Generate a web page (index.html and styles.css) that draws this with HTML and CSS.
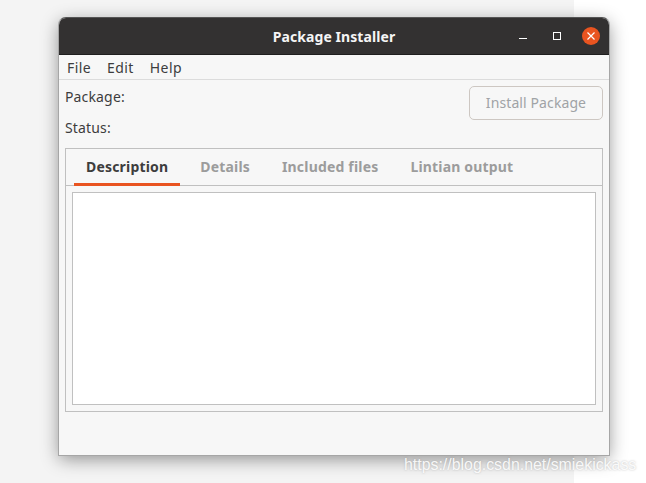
FILE: index.html
```html
<!DOCTYPE html>
<html lang="en">
<head>
<meta charset="utf-8">
<title>Package Installer</title>
<link rel="stylesheet" href="styles.css">
</head>
<body>
<div class="desktop">
  <div class="window">
    <header class="titlebar">
      <div class="title">Package Installer</div>
      <div class="controls">
        <svg class="ctl" width="16" height="16" viewBox="0 0 16 16"><rect x="4" y="10" width="8" height="1" fill="#fff"/></svg>
        <svg class="ctl" width="16" height="16" viewBox="0 0 16 16"><rect x="4.5" y="4.5" width="7" height="7" fill="none" stroke="#fff" stroke-width="1"/></svg>
        <svg class="ctl close" width="18" height="18" viewBox="0 0 18 18"><circle cx="9" cy="9" r="9" fill="#e95420"/><path d="M5.5 5.5l7 7M12.5 5.5l-7 7" stroke="#fff" stroke-width="1.2" fill="none"/></svg>
      </div>
    </header>
    <nav class="menubar">
      <span class="menu">File</span><span class="menu">Edit</span><span class="menu">Help</span>
    </nav>
    <div class="content">
      <div class="info">
        <div class="labels">
          <div class="label">Package:</div>
          <div class="label">Status:</div>
        </div>
        <button class="install" disabled>Install Package</button>
      </div>
      <section class="notebook">
        <div class="tabs">
          <span class="tab active">Description</span>
          <span class="tab">Details</span>
          <span class="tab">Included files</span>
          <span class="tab">Lintian output</span>
        </div>
        <div class="page"><div class="textview"></div></div>
      </section>
    </div>
  </div>
  <div class="watermark">https://blog.csdn.net/smiekickass</div>
</div>
</body>
</html>
```
FILE: styles.css
```css
* { box-sizing: border-box; }
html, body { margin: 0; padding: 0; background: #fff; }
body { width: 646px; height: 483px; overflow: hidden; font-family: "Noto Sans", sans-serif; }
.desktop { position: relative; width: 646px; height: 483px; }
.desktop::before { content: ""; position: absolute; left: 0; top: 0; width: 574px; height: 483px; background: #f4f4f4; }
.window {
  position: absolute; left: 58px; top: 17px; width: 552px; height: 439px; z-index: 1;
  display: flex; flex-direction: column;
  background: #f7f7f7; border: 1px solid #a6a6a6; border-top-color: #555;
  border-radius: 8px 8px 0 0; overflow: hidden;
}
.desktop::after {
  content: ""; position: absolute; left: 59px; top: 18px; width: 550px; height: 437px;
  border-radius: 8px 8px 0 0; box-shadow: 0 4px 18px rgba(0,0,0,.42); z-index: 0;
}
.titlebar {
  position: relative; height: 37px; flex: none; background: #333131;
  border-bottom: 1px solid #1f1e1e;
  display: flex; align-items: center; justify-content: center;
}
.title { color: #f5f5f5; font-size: 14px; font-weight: 700; letter-spacing: .08px; }
.controls { position: absolute; right: 9px; top: 9px; display: flex; align-items: center; gap: 18px; }
.ctl { display: block; flex: none; }
.close { margin-left: -1px; }
.menubar {
  height: 25px; flex: none; display: flex; align-items: center; padding-left: 8px; gap: 16px;
  border-bottom: 1px solid #dcdcdc;
}
.menu { font-size: 14px; color: #3d3d3d; letter-spacing: .42px; }
.content { flex: 1; padding: 6px 6px 0; display: flex; flex-direction: column; }
.info { display: flex; justify-content: space-between; height: 62px; }
.labels { display: flex; flex-direction: column; padding-top: 1px; gap: 12px; }
.label { font-size: 14px; line-height: 19px; color: #3d3d3d; letter-spacing: .15px; }
.install {
  width: 134px; height: 34px; padding: 0 0 2px; font: inherit; font-size: 14px; letter-spacing: .1px; color: #a0a3a6;
  background: #f7f7f7; border: 1px solid #cdc7c2; border-radius: 5px;
}
.notebook { height: 264px; width: 538px; border: 1px solid #c0c0c0; display: flex; flex-direction: column; }
.tabs { height: 37px; flex: none; display: flex; padding-left: 8px; gap: 8px; border-bottom: 1px solid #c0c0c0; }
.tab {
  height: 37px; padding: 0 12px; font-size: 14px; font-weight: 700; line-height: 36px; letter-spacing: .18px;
  color: #9c9c9c;
}
.tab.active { color: #3d3d3d; border-bottom: 3px solid #e95420; }
.page { flex: 1; padding: 6px; display: flex; }
.textview { flex: 1; background: #fff; border: 1px solid #c0c0c0; }
.watermark {
  position: absolute; left: 404px; top: 456px; z-index: 2; font-family: "Liberation Sans", sans-serif;
  font-size: 15.9px; color: rgba(255,255,255,.9); text-shadow: 0 0 2px rgba(130,130,130,.5); white-space: nowrap;
}
```
